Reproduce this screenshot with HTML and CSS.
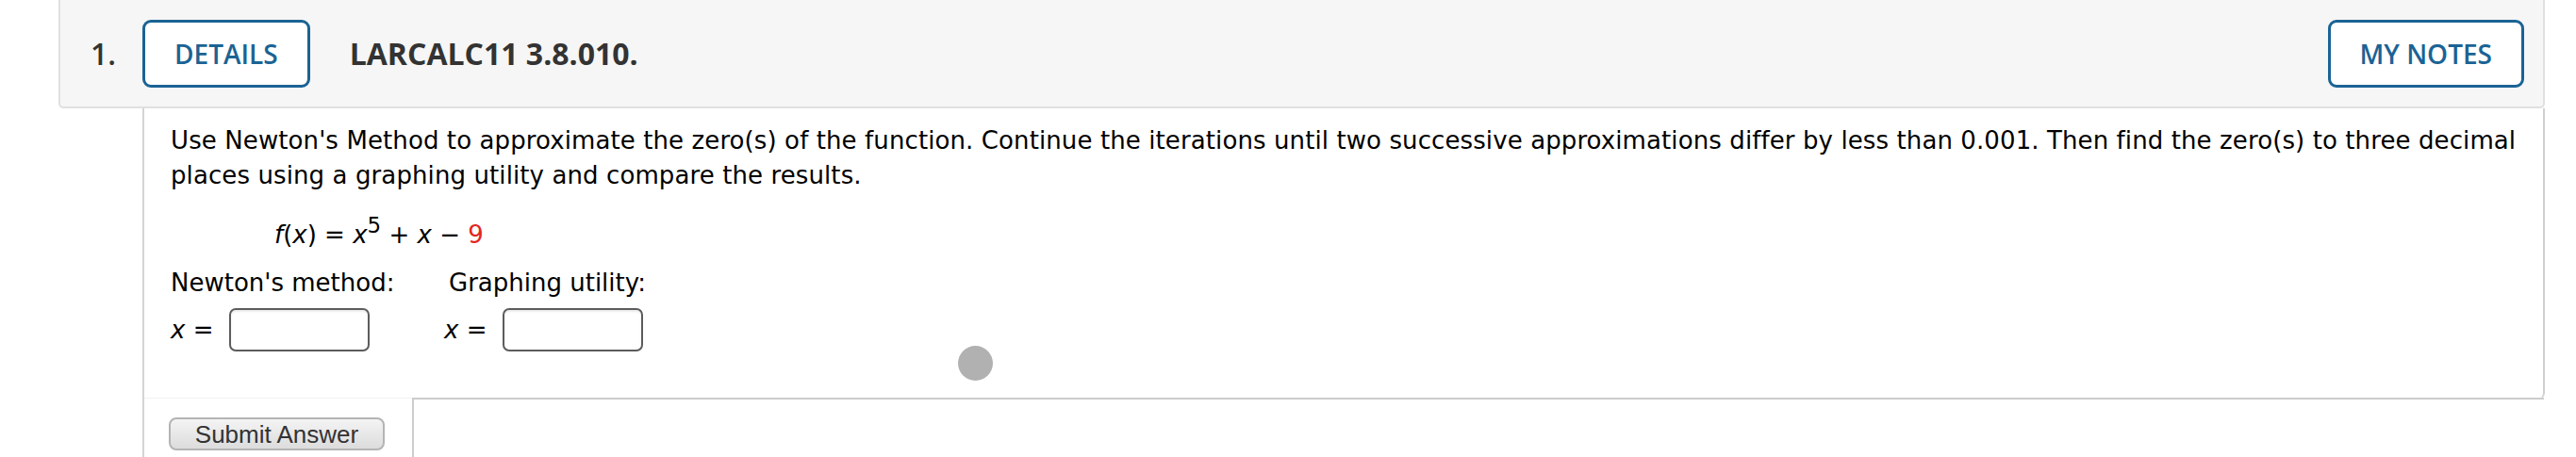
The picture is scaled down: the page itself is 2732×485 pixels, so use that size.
FILE: index.html
```html
<!DOCTYPE html>
<html>
<head>
<meta charset="utf-8">
<link rel="stylesheet" href="styles.css">
</head>
<body>
<div class="question">
  <div class="q-header">
    <span class="q-num">1.</span>
    <button class="hdr-btn details">DETAILS</button>
    <span class="q-id">LARCALC11 3.8.010.</span>
    <button class="hdr-btn notes">MY NOTES</button>
  </div>
  <div class="q-body">
    <div class="prompt">
      <p class="text">Use Newton's Method to approximate the zero(s) of the function. Continue the iterations until two successive approximations differ by less than 0.001. Then find the zero(s) to three decimal places using a graphing utility and compare the results.</p>
      <p class="formula"><i>f</i>(<i>x</i>) = <i>x</i><sup class="pow">5</sup> + <i>x</i> − <span class="red">9</span></p>
      <div class="answers">
        <div class="col">
          <div class="label">Newton's method:</div>
          <div class="row"><span class="eq"><i>x</i> =</span><span class="field"></span></div>
        </div>
        <div class="col col2">
          <div class="label shift">Graphing utility:</div>
          <div class="row"><span class="eq"><i>x</i> =</span><span class="field"></span></div>
        </div>
      </div>
    </div>
    <div class="footer">
      <div class="submit-cell"><button class="submit">Submit Answer</button></div>
      <div class="panel"></div>
    </div>
  </div>
</div>
<div class="dot"></div>
</body>
</html>
```

FILE: styles.css
```css
html, body {
  margin: 0;
  padding: 0;
  background: #ffffff;
}
body {
  width: 2732px;
  height: 485px;
  overflow: hidden;
  position: relative;
}
.question {
  margin-left: 62px;
  width: 2637px;
}
.q-header {
  box-sizing: border-box;
  height: 115px;
  display: flex;
  align-items: center;
  padding: 0 20px 0 32px;
  background: #f6f6f6;
  border: 2px solid #e0e0e0;
  border-top: none;
  border-radius: 0 0 5px 5px;
  font-family: "Open Sans", sans-serif;
  color: #333333;
}
.q-num {
  font-size: 32px;
  font-weight: 600;
  margin-right: 28px;
}
.hdr-btn {
  box-sizing: border-box;
  height: 72px;
  padding: 0 31px;
  background: #ffffff;
  border: 3px solid #1b6394;
  border-radius: 9px;
  color: #1b6394;
  font-family: "Open Sans", sans-serif;
  font-size: 28px;
  font-weight: 600;
}
.q-id {
  margin-left: 42px;
  font-size: 32px;
  font-weight: 700;
  flex: 1;
}
.q-body {
  margin-left: 89px;
  border-left: 2px solid #d4d4d4;
  font-family: "DejaVu Sans", Verdana, sans-serif;
  font-size: 26px;
  color: #000000;
}
.prompt {
  box-sizing: border-box;
  height: 308px;
  padding: 16px 8px 0 28px;
  border-right: 2px solid #d0d0d0;
  border-bottom: 1px solid #f2f2f2;
  border-radius: 0 0 6px 0;
}
.text {
  margin: 0;
  line-height: 37px;
  letter-spacing: 0.1px;
}
.formula {
  margin: 26px 0 0 110px;
  line-height: 37px;
}
.pow {
  font-size: 23px;
  vertical-align: 11px;
  line-height: 0;
}
.red {
  color: #e3261f;
}
.answers {
  display: flex;
  margin-top: 14px;
}
.col {
  width: 290px;
}
.col2 {
  width: 240px;
}
.label {
  line-height: 37px;
}
.shift {
  padding-left: 5px;
}
.row {
  display: flex;
  align-items: center;
  margin-top: 8px;
  height: 46px;
}
.eq {
  white-space: pre;
  width: 62px;
}
.field {
  box-sizing: border-box;
  display: inline-block;
  width: 149px;
  height: 46px;
  border: 2px solid #5c5c5c;
  border-radius: 7px;
  background: #ffffff;
  box-shadow: inset 0 2px 2px rgba(0, 0, 0, 0.08);
}
.footer {
  display: flex;
  margin-top: -1px;
  height: 70px;
}
.submit-cell {
  width: 284px;
  padding: 21px 0 0 26px;
  box-sizing: border-box;
}
.submit {
  box-sizing: border-box;
  width: 229px;
  height: 35px;
  padding: 0;
  border: 2px solid #b4b4b4;
  border-radius: 8px;
  background: linear-gradient(#f4f4f4, #dcdcdc);
  font-family: "Liberation Sans", Arial, sans-serif;
  font-size: 26px;
  line-height: 30px;
  color: #333333;
}
.panel {
  flex: 1;
  border-top: 2px solid #cccccc;
  border-left: 2px solid #cccccc;
  margin-right: 1px;
}
.dot {
  position: absolute;
  left: 1016px;
  top: 367px;
  width: 37px;
  height: 37px;
  border-radius: 50%;
  background: #b1b1b1;
}
```
